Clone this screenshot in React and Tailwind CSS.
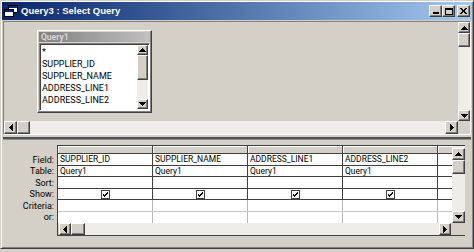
import React from "react";

const raised =
  "border border-t-white border-l-white border-r-[#404040] border-b-[#404040] shadow-[inset_-1px_-1px_0_#808080] bg-[#d4d0c8]";

function Arrow({ dir }) {
  // classic 7x4 scroll arrows drawn with pixel rows
  const rows = [1, 3, 5, 7];
  if (dir === "up" || dir === "down") {
    const list = dir === "up" ? rows : [...rows].reverse();
    return (
      <svg width="7" height="4" shapeRendering="crispEdges">
        {list.map((w, i) => (
          <rect key={i} x={(7 - w) / 2} y={i} width={w} height="1" fill="#000" />
        ))}
      </svg>
    );
  }
  const list = dir === "left" ? rows : [...rows].reverse();
  return (
    <svg width="4" height="7" shapeRendering="crispEdges">
      {list.map((h, i) => (
        <rect key={i} x={i} y={(7 - h) / 2} width="1" height={h} fill="#000" />
      ))}
    </svg>
  );
}

function Btn({ dir, className }) {
  return (
    <div className={`${raised} ${className} flex items-center justify-center shrink-0`}>
      <Arrow dir={dir} />
    </div>
  );
}

function Check() {
  return (
    <div className="w-[9px] h-[9px] bg-white border border-[#404040] flex items-center justify-center">
      <svg width="7" height="7" viewBox="0 0 7 7" shapeRendering="crispEdges">
        <path d="M1 3h1v1H1zM1 4h2v1H1zM2 5h1v1H2zM3 4h1v1H3zM4 3h1v1H4zM5 1h1v2H5zM3 3h1v1H3zM2 4h1v1H2zM4 2h1v1H4z" fill="#000" />
      </svg>
    </div>
  );
}

function WindowIcon() {
  return (
    <svg width="14" height="12" viewBox="0 0 14 12" shapeRendering="crispEdges">
      <rect x="4.5" y="0.5" width="9" height="7" fill="#fff" stroke="#000" />
      <rect x="5" y="1" width="8" height="2" fill="#0a246a" />
      <rect x="0.5" y="4.5" width="9" height="7" fill="#fff" stroke="#000" />
      <rect x="1" y="5" width="8" height="2" fill="#0a246a" />
    </svg>
  );
}

const columns = [
  { field: "SUPPLIER_ID", table: "Query1" },
  { field: "SUPPLIER_NAME", table: "Query1" },
  { field: "ADDRESS_LINE1", table: "Query1" },
  { field: "ADDRESS_LINE2", table: "Query1" },
];

const rows = [
  { key: "field", label: "Field:", h: "h-[12px]", line: "border-b border-b-[#404040]", v: "border-r border-r-[#404040]" },
  { key: "table", label: "Table:", h: "h-[11px]", line: "border-b border-b-[#404040]", v: "border-r border-r-[#404040]" },
  { key: "sort", label: "Sort:", h: "h-[12px]", line: "border-b border-b-[#404040]", v: "border-r border-r-[#404040]" },
  { key: "show", label: "Show:", h: "h-[11px]", line: "border-b border-b-[#404040]", v: "border-r border-r-[#404040]" },
  { key: "criteria", label: "Criteria:", h: "h-[12px]", line: "border-b border-b-[#c8c8c8]", v: "border-r border-r-[#b8b8b8]" },
  { key: "or", label: "or:", h: "h-[11px]", line: "", v: "border-r border-r-[#b8b8b8]" },
];

const tableFields = ["*", "SUPPLIER_ID", "SUPPLIER_NAME", "ADDRESS_LINE1", "ADDRESS_LINE2"];

export default function App() {
  return (
    <div className="w-[474px] h-[252px] overflow-hidden bg-[#d4d0c8] font-['Roboto',sans-serif] text-[8.5px] leading-none text-black">
      <div className="h-[249px] flex flex-col p-[1px] border border-t-[#d4d0c8] border-l-[#d4d0c8] border-r-[#404040] border-b-[#404040] shadow-[inset_1px_1px_0_#fff,inset_-1px_-1px_0_#808080]">
        {/* title bar */}
        <div className="h-[18px] shrink-0 flex items-center pl-[2px] pr-[2px] bg-linear-to-r from-[#0a246a] to-[#a6caf0]">
          <WindowIcon />
          <span className="ml-[3px] font-['Liberation_Sans',Arial,sans-serif] font-bold text-[9.5px] text-white">
            Query3 : Select Query
          </span>
          <div className="ml-auto flex items-center">
            <div className={`${raised} w-[13px] h-[12px] flex items-end justify-center pb-[2px]`}>
              <div className="w-[6px] h-[2px] bg-black" />
            </div>
            <div className={`${raised} w-[13px] h-[12px] flex items-center justify-center`}>
              <div className="w-[8px] h-[7px] border border-black border-t-2" />
            </div>
            <div className={`${raised} ml-[2px] w-[13px] h-[12px] flex items-center justify-center`}>
              <svg width="7" height="6" viewBox="0 0 7 6" shapeRendering="crispEdges">
                <path d="M0 0h2v1H0zM5 0h2v1H5zM1 1h2v1H1zM4 1h2v1H4zM2 2h3v2H2zM1 4h2v1H1zM4 4h2v1H4zM0 5h2v1H0zM5 5h2v1H5z" fill="#000" />
              </svg>
            </div>
          </div>
        </div>

        {/* upper pane: table canvas */}
        <div className="mt-[1px] ml-[1px] mr-[1px] h-[114px] shrink-0 flex flex-col border border-t-[#808080] border-l-[#808080] border-r-white border-b-white">
          <div className="flex-1 flex min-h-0">
            <div className="flex-1 relative">
              <div className={`absolute left-[33px] top-[8px] w-[115px] h-[83px] ${raised} p-[1px] flex flex-col`}>
                <div className="h-[10px] shrink-0 flex items-center pl-[2px] bg-linear-to-r from-[#808080] to-[#c0c0c0] text-[#d8d6d0] font-bold text-[8.5px]">
                  Query1
                </div>
                <div className="mt-[1px] flex-1 flex bg-white border border-t-[#808080] border-l-[#808080] border-r-white border-b-white shadow-[inset_1px_1px_0_#404040]">
                  <div className="flex-1 pt-[2px] pl-[2px] text-[9px]">
                    {tableFields.map((f) => (
                      <div key={f} className="h-[12px] flex items-center">
                        {f}
                      </div>
                    ))}
                  </div>
                  <div className="w-[11px] flex flex-col pt-[1px] pb-[1px] mr-[1px]">
                    <Btn dir="up" className="h-[10px]" />
                    <div className={`${raised} h-[25px]`} />
                    <div className="flex-1 bg-[#eeede9]" />
                    <Btn dir="down" className="h-[10px]" />
                  </div>
                </div>
              </div>
            </div>
            <div className="w-[12px] flex flex-col bg-[#eeede9]">
              <Btn dir="up" className="h-[11px]" />
              <div className={`${raised} h-[14px]`} />
              <div className="flex-1" />
              <Btn dir="down" className="h-[11px]" />
            </div>
          </div>
          <div className="h-[13px] shrink-0 flex">
            <Btn dir="left" className="w-[13px]" />
            <div className={`${raised} w-[13px]`} />
            <div className="flex-1 bg-[#eeede9]" />
            <Btn dir="right" className="w-[13px]" />
            <div className="w-[12px] bg-[#d4d0c8]" />
          </div>
        </div>

        {/* splitter */}
        <div className="h-[10px] shrink-0 flex flex-col ml-[1px] mr-[1px]">
          <div className="h-[2px]" />
          <div className="h-[2px] bg-[#505050]" />
          <div className="h-[1px] bg-[#909090]" />
        </div>

        {/* lower pane: design grid */}
        <div className="flex shrink-0">
          <div className="w-[55px] shrink-0 flex flex-col pt-[9px] pr-[3px] text-[9px]">
            {rows.map((r) => (
              <div key={r.key} className={`${r.h} flex items-center justify-end`}>
                {r.label}
              </div>
            ))}
          </div>
          <div className="flex flex-col border-l border-t border-b border-[#404040]">
            <div className="flex">
              <div className="w-[394px] flex flex-col bg-white">
                <div className="h-[8px] flex bg-[#d4d0c8] border-b border-b-[#404040]">
                  {columns.map((c) => (
                    <div key={c.field} className="w-[95px] shrink-0 border-r border-r-[#404040] shadow-[inset_1px_1px_0_#fff]" />
                  ))}
                  <div className="flex-1 shadow-[inset_1px_1px_0_#fff]" />
                </div>
                {rows.map((r) => (
                  <div key={r.key} className={`${r.h} flex ${r.line}`}>
                    {columns.map((c) => (
                      <div key={c.field} className={`w-[95px] shrink-0 ${r.v} flex items-center ${r.key === "show" ? "justify-center" : "pl-[2px]"}`}>
                        {r.key === "field" && c.field}
                        {r.key === "table" && c.table}
                        {r.key === "show" && <Check />}
                      </div>
                    ))}
                    <div className="flex-1" />
                  </div>
                ))}
              </div>
              <div className="w-[13px] flex flex-col bg-[#eeede9]">
                <Btn dir="up" className="h-[12px] mt-[2px]" />
                <div className={`${raised} h-[14px]`} />
                <div className="flex-1" />
                <Btn dir="down" className="h-[12px]" />
              </div>
            </div>
            <div className="h-[12px] flex">
              <Btn dir="left" className="w-[12px] ml-[1px]" />
              <div className={`${raised} w-[14px]`} />
              <div className="flex-1 bg-[#eeede9]" />
              <Btn dir="right" className="w-[12px]" />
              <div className="w-[14px] bg-[#d4d0c8]" />
            </div>
          </div>
        </div>
      </div>
    </div>
  );
}
